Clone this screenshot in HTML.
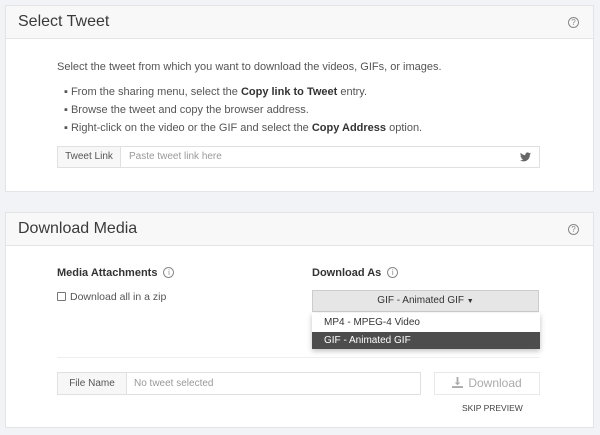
<!DOCTYPE html>
<html><head><style>
*{box-sizing:border-box;margin:0;padding:0}
body{width:600px;height:435px;background:#f2f3f6;font-family:"Liberation Sans",sans-serif;color:#444;font-size:11px;position:relative;overflow:hidden}
.abs{position:absolute}
.panel{position:absolute;left:5px;width:589px;background:#fff;border:1px solid #e3e4e8}
.hdr{position:absolute;left:0;top:0;right:0;height:33px;background:#f8f8f9;border-bottom:1px solid #e3e4e8}
.hdr .t{position:absolute;left:12px;top:7px;font-size:16px;color:#3a3a3a}
.help{position:absolute;right:14px;top:11px;width:11px;height:11px;border:1px solid #888;border-radius:50%;font-size:8px;line-height:9px;text-align:center;color:#888}
.info{display:inline-block;width:11px;height:11px;border:1px solid #888;border-radius:50%;font-size:8px;line-height:9px;text-align:center;color:#888;font-weight:normal;vertical-align:1px;margin-left:6px}
b{color:#333}
</style></head><body>
<div class="panel" style="top:5px;height:187px">
 <div class="hdr"><div class="t">Select Tweet</div><div class="help">?</div></div>
</div>
<div class="abs" style="left:57px;top:61px;font-size:11px;color:#555">Select the tweet from which you want to download the videos, GIFs, or images.</div>
<div class="abs" style="left:64px;top:83px;font-size:11px;color:#555;line-height:18px">
▪ From the sharing menu, select the <b>Copy link to Tweet</b> entry.<br>
▪ Browse the tweet and copy the browser address.<br>
▪ Right-click on the video or the GIF and select the <b>Copy Address</b> option.</div>
<div class="abs" style="left:57px;top:146px;width:483px;height:22px;border:1px solid #e0e0e0;background:#fff">
 <div class="abs" style="left:0;top:0;width:63px;height:20px;background:#f7f7f7;border-right:1px solid #e0e0e0;font-size:10px;line-height:20px;text-align:center;color:#555">Tweet Link</div>
 <div class="abs" style="left:71px;top:0;line-height:20px;font-size:10px;color:#999">Paste tweet link here</div>
 <svg class="abs" style="right:8px;top:5px" width="11" height="10" viewBox="0 0 24 20"><path fill="#666" d="M24 2.4a10 10 0 0 1-2.8.8A5 5 0 0 0 23.3.4a10 10 0 0 1-3.1 1.2A4.9 4.9 0 0 0 11.8 6 14 14 0 0 1 1.700.9a4.9 4.9 0 0 0 1.5 6.6 4.9 4.9 0 0 1-2.2-.6 4.9 4.9 0 0 0 3.9 4.9 5 5 0 0 1-2.2.1 4.9 4.9 0 0 0 4.6 3.4A9.9 9.9 0 0 1 0 17.3 14 14 0 0 0 7.5 19.5c9.1 0 14-7.5 14-14v-.6A10 10 0 0 0 24 2.4z"/></svg>
</div>

<div class="panel" style="top:212px;height:216px">
 <div class="hdr"><div class="t">Download Media</div><div class="help">?</div></div>
</div>
<div class="abs" style="left:57px;top:267px;font-weight:bold;color:#333;font-size:11px">Media Attachments<span class="info">i</span></div>
<div class="abs" style="left:57px;top:291px;color:#555;font-size:10.5px"><span style="display:inline-block;width:9px;height:9px;border:1px solid #777;border-radius:1px;vertical-align:-1px;margin-right:4px"></span>Download all in a zip</div>
<div class="abs" style="left:312px;top:267px;font-weight:bold;color:#333;font-size:11px">Download As<span class="info">i</span></div>
<div class="abs" style="left:312px;top:290px;width:227px;height:22px;background:#e6e6e6;border:1px solid #ccc;text-align:center;line-height:20px;font-size:10px;color:#333">GIF - Animated GIF <span style="font-size:7px">▼</span></div>
<div class="abs" style="left:312px;top:313px;width:228px;height:36px;background:#fff;box-shadow:0 2px 5px rgba(0,0,0,.25)">
 <div class="abs" style="left:12px;top:4px;font-size:10px;color:#333">MP4 - MPEG-4 Video</div>
 <div class="abs" style="left:0;top:19px;width:228px;height:17px;background:#4d4d4d;color:#fff;font-size:10px;line-height:17px;padding-left:12px">GIF - Animated GIF</div>
</div>
<div class="abs" style="left:57px;top:357px;width:483px;height:1px;background:#eee"></div>
<div class="abs" style="left:57px;top:372px;width:364px;height:23px;border:1px solid #e0e0e0;background:#fff">
 <div class="abs" style="left:0;top:0;width:69px;height:21px;background:#f7f7f7;border-right:1px solid #e0e0e0;font-size:10px;line-height:21px;text-align:center;color:#555">File Name</div>
 <div class="abs" style="left:76px;top:0;line-height:21px;font-size:10px;color:#999">No tweet selected</div>
</div>
<div class="abs" style="left:434px;top:372px;width:106px;height:23px;border:1px solid #e8e8e8;background:#fff;text-align:center;line-height:21px;font-size:12px;color:#aaa">
 <svg width="11" height="11" viewBox="0 0 12 12" style="vertical-align:-1px;margin-right:5px"><path fill="#aaa" d="M5 0h2v6h2L6 9 3 6h2zM0 10h12v2H0z"/></svg>Download</div>
<div class="abs" style="left:462px;top:403px;font-size:8.5px;color:#444">SKIP PREVIEW</div>
</body></html>
